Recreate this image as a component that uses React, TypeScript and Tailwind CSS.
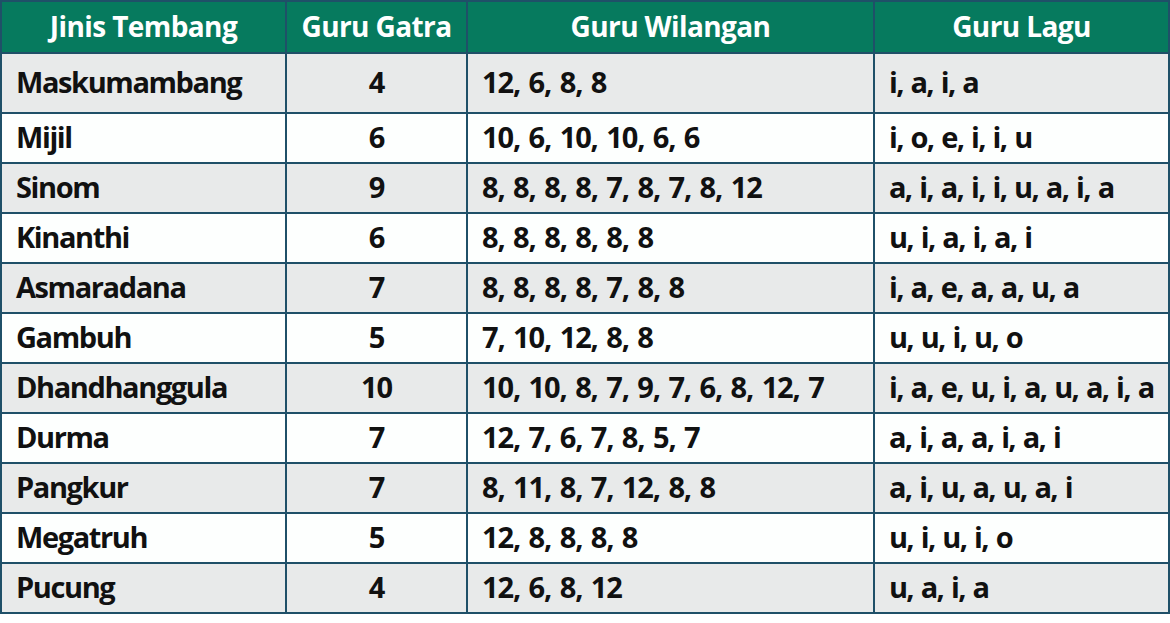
const rows: [string, string, string, string][] = [
  ["Maskumambang", "4", "12, 6, 8, 8", "i, a, i, a"],
  ["Mijil", "6", "10, 6, 10, 10, 6, 6", "i, o, e, i, i, u"],
  ["Sinom", "9", "8, 8, 8, 8, 7, 8, 7, 8, 12", "a, i, a, i, i, u, a, i, a"],
  ["Kinanthi", "6", "8, 8, 8, 8, 8, 8", "u, i, a, i, a, i"],
  ["Asmaradana", "7", "8, 8, 8, 8, 7, 8, 8", "i, a, e, a, a, u, a"],
  ["Gambuh", "5", "7, 10, 12, 8, 8", "u, u, i, u, o"],
  ["Dhandhanggula", "10", "10, 10, 8, 7, 9, 7, 6, 8, 12, 7", "i, a, e, u, i, a, u, a, i, a"],
  ["Durma", "7", "12, 7, 6, 7, 8, 5, 7", "a, i, a, a, i, a, i"],
  ["Pangkur", "7", "8, 11, 8, 7, 12, 8, 8", "a, i, u, a, u, a, i"],
  ["Megatruh", "5", "12, 8, 8, 8, 8", "u, i, u, i, o"],
  ["Pucung", "4", "12, 6, 8, 12", "u, a, i, a"],
];

export default function App() {
  return (
    <div className="w-[1170px] h-[623px] bg-white" style={{ fontFamily: '"Open Sans", sans-serif' }}>
      <table className="table-fixed border-collapse w-[1168px] text-[29px] font-bold text-[#111]">
        <colgroup>
          <col className="w-[285px]" />
          <col className="w-[181px]" />
          <col className="w-[407px]" />
          <col className="w-[295px]" />
        </colgroup>
        <thead>
          <tr className="h-[52px] bg-[#067a5e] text-white text-[28px] tracking-[-0.6px]">
            <th className="border-2 border-[#1f5068] font-bold pb-[3px]">Jinis Tembang</th>
            <th className="border-2 border-[#1f5068] font-bold pb-[3px]">Guru Gatra</th>
            <th className="border-2 border-[#1f5068] font-bold pb-[3px]">Guru Wilangan</th>
            <th className="border-2 border-[#1f5068] font-bold pb-[3px]">Guru Lagu</th>
          </tr>
        </thead>
        <tbody>
          {rows.map((r, i) => (
            <tr key={r[0]} className={`${i === 0 ? "h-[60px]" : "h-[50px]"} ${i % 2 === 0 ? "bg-[#e8eaea]" : "bg-[#fdfffe]"}`}>
              <td className="border-2 border-[#1f5068] pl-[14px] pb-[3px] whitespace-nowrap tracking-[-1.4px]">{r[0]}</td>
              <td className="border-2 border-[#1f5068] pb-[3px] text-center tracking-[-1.1px]">{r[1]}</td>
              <td className="border-2 border-[#1f5068] pl-[14px] pb-[3px] whitespace-nowrap tracking-[-1.1px] [word-spacing:2px]">{r[2]}</td>
              <td className="border-2 border-[#1f5068] pl-[14px] pb-[3px] whitespace-nowrap tracking-[-1.7px] [word-spacing:2px]">{r[3]}</td>
            </tr>
          ))}
        </tbody>
      </table>
    </div>
  );
}
